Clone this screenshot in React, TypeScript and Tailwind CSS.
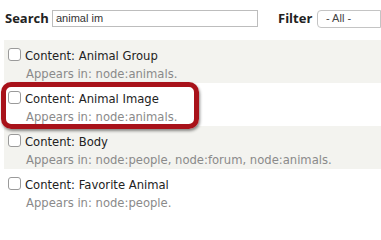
export default function App() {
  const rows = [
    { title: "Content: Animal Group", where: "node:animals." },
    { title: "Content: Animal Image", where: "node:animals." },
    { title: "Content: Body", where: "node:people, node:forum, node:animals." },
    { title: "Content: Favorite Animal", where: "node:people." },
  ];

  return (
    <div className="w-[381px] h-[222px] overflow-hidden bg-white" style={{ fontFamily: "'DejaVu Sans', sans-serif" }}>
      {/* filter bar */}
      <div className="flex items-center h-[40px] pl-[5px] pb-[3px]">
        <span className="w-[43px] text-[13px] font-bold text-[#222]" style={{ fontFamily: "'Open Sans', sans-serif" }}>Search</span>
        <div className="ml-[4px] w-[206px] h-[17px] border border-[#bdbdbd] flex items-center pl-[3px] text-[11px] text-[#333]" style={{ fontFamily: "'Liberation Sans', sans-serif" }}>
          animal im
        </div>
        <span className="ml-[20px] w-[34px] text-[13px] font-bold text-[#222]" style={{ fontFamily: "'Open Sans', sans-serif" }}>Filter</span>
        <div className="ml-[5px] flex-1 h-[18px] border border-[#c4c4c4] rounded-l-[4px] flex items-center pl-[8px] text-[11px] text-[#444]" style={{ fontFamily: "'Liberation Sans', sans-serif" }}>
          - All -
        </div>
      </div>

      {/* list */}
      <div className="relative ml-[4px]">
        {rows.map((r, i) => (
          <div key={r.title} className={`flex h-[43px] pt-[7px] pl-[4px] ${i % 2 === 0 ? "bg-[#f3f3ef]" : "bg-white"}`}>
            <div className="mt-[1px] w-[13px] h-[13px] border border-[#9a9a9a] rounded-[3px] bg-white shrink-0" />
            <div className="ml-[4px] leading-[18px] text-[11.6px]">
              <div className="text-[#222]">{r.title}</div>
              <div className="pl-[1px] text-[#8a8a8a]">Appears in: {r.where}</div>
            </div>
          </div>
        ))}
        {/* callout */}
        <div className="absolute left-[-3px] top-[42px] w-[198px] h-[47px] border-[5px] border-[#a8121a] rounded-[10px] shadow-[1px_2px_3px_rgba(0,0,0,0.45)]" />
      </div>
    </div>
  );
}
